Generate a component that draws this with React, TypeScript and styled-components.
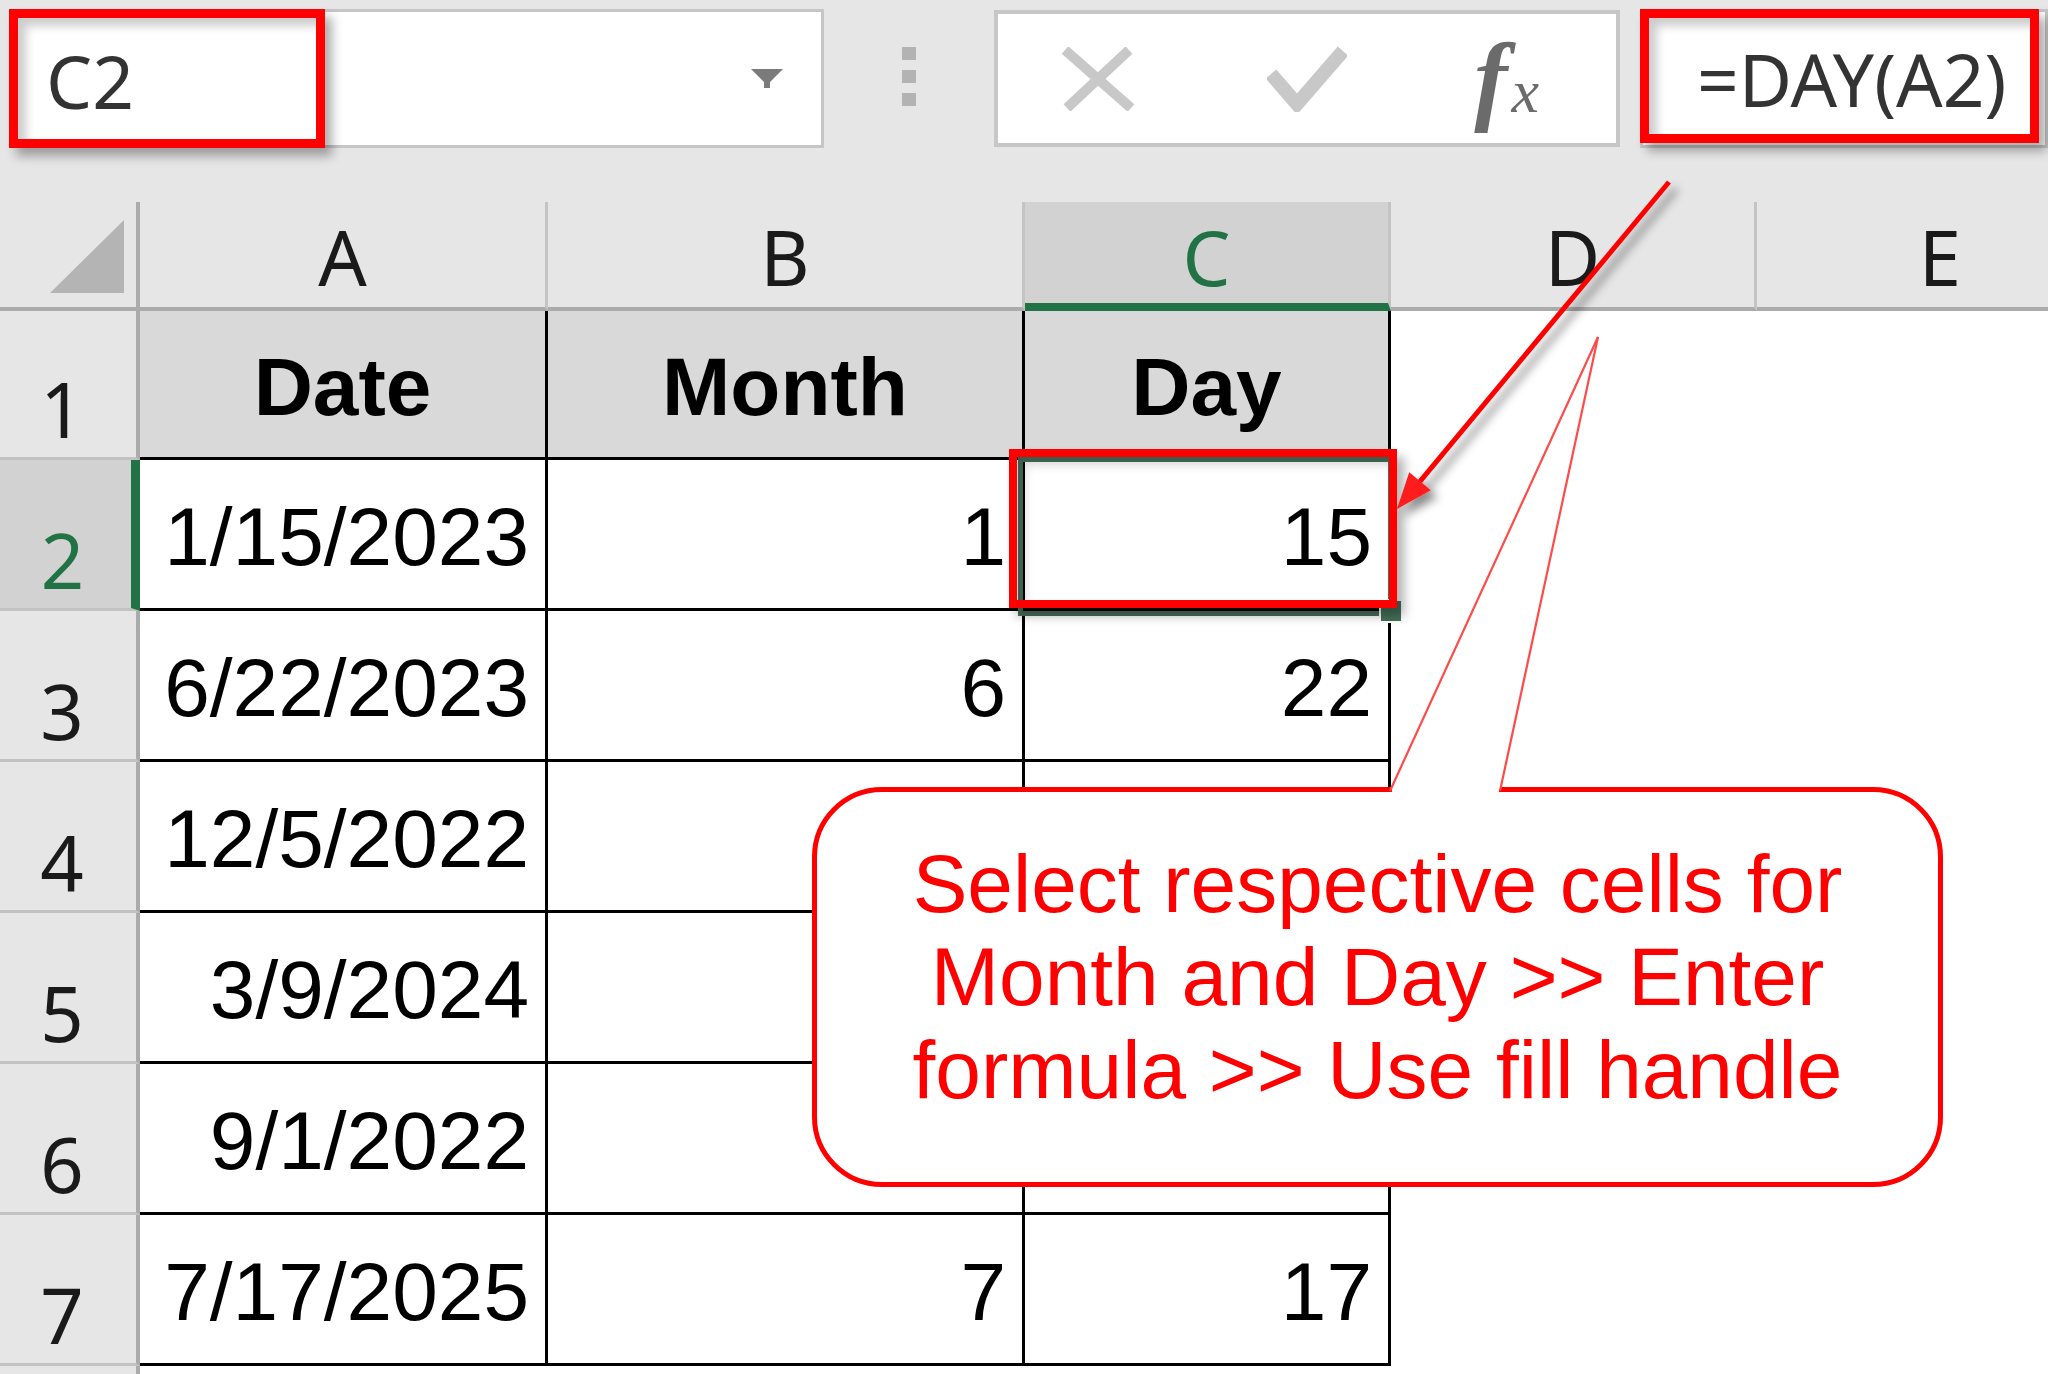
import React from "react";
import styled, { createGlobalStyle } from "styled-components";

const GlobalStyle = createGlobalStyle`
  html, body { margin: 0; padding: 0; background: #ffffff; }
  body { font-family: "Noto Sans", "Open Sans", sans-serif; }
  #root { width: 2048px; height: 1374px; }
`;

const COLS = "140px 408px 477px 366px 366px 366px";

const Page = styled.div`
  position: relative;
  width: 2048px;
  height: 1374px;
  overflow: hidden;
  background: #ffffff;
`;

/* ---------- formula bar ---------- */
const TopBar = styled.div`
  display: flex;
  align-items: flex-start;
  height: 202px;
  box-sizing: border-box;
  padding: 9px 0 0 9px;
  background: #e6e6e6;
`;

const NameBox = styled.div`
  display: flex;
  align-items: center;
  width: 815px;
  height: 139px;
  background: #ffffff;
  box-shadow: inset 0 0 0 3px #c6c6c6;
`;

const Highlight = styled.div<{ $w: number; $h?: number }>`
  box-sizing: border-box;
  width: ${(p) => p.$w}px;
  height: ${(p) => (p.$h ? `${p.$h}px` : "100%")};
  border: 9px solid #ff0000;
  background: #ffffff;
  box-shadow: 7px 8px 10px rgba(0, 0, 0, 0.32),
    inset 8px 8px 10px rgba(0, 0, 0, 0.2);
  display: flex;
  align-items: center;
  position: relative;
  z-index: 2;
`;

const BarText = styled.span<{ $pad: number }>`
  padding-left: ${(p) => p.$pad}px;
  padding-top: 4px;
  font-family: "Noto Sans", "Open Sans", sans-serif;
  font-size: 73px;
  line-height: 1;
  color: #333333;
  white-space: nowrap;
`;

const DropArrow = styled.svg`
  margin-left: auto;
  margin-right: 41px;
  width: 32px;
  height: 19px;
  fill: #7b7b7b;
`;

const DotsColumn = styled.div`
  width: 170px;
  height: 139px;
  display: flex;
  flex-direction: column;
  align-items: center;
  justify-content: center;
  gap: 10px;
  padding-bottom: 4px;
  box-sizing: border-box;
`;

const Dot = styled.span`
  width: 14px;
  height: 13px;
  background: #b3b3b3;
`;

const FormulaButtons = styled.div`
  width: 626px;
  height: 137px;
  margin-top: 1px;
  background: #ffffff;
  box-shadow: inset 0 0 0 4px #c6c6c6;
  display: grid;
  grid-template-columns: repeat(3, 1fr);
  align-items: center;
  justify-items: center;
`;

const IconSvg = styled.svg<{ $w: number; $h: number }>`
  width: ${(p) => p.$w}px;
  height: ${(p) => p.$h}px;
  stroke: #c8c8c8;
  fill: none;
`;

const FxMark = styled.span`
  display: inline-flex;
  align-items: baseline;
  margin-right: 18px;
  font-family: "Liberation Serif", "DejaVu Serif", serif;
  font-style: italic;
  color: #6b6b6b;
  line-height: 1;
`;

const FxF = styled.span`
  font-size: 100px;
  font-weight: 700;
`;

const FxX = styled.span`
  font-size: 62px;
  font-weight: 400;
  margin-left: 4px;
`;

const FormulaInput = styled.div`
  flex: 1;
  height: 139px;
  margin-left: 20px;
  background: #ffffff;
  box-shadow: inset 0 0 0 3px #c6c6c6;
  display: flex;
  align-items: flex-start;
`;

/* ---------- sheet ---------- */
const GridRow = styled.div<{ $h: number }>`
  display: grid;
  grid-template-columns: ${COLS};
  height: ${(p) => p.$h}px;
`;

const Corner = styled.div`
  box-sizing: border-box;
  background: #e6e6e6;
  border-right: 4px solid #ababab;
  border-bottom: 4px solid #ababab;
  display: flex;
  align-items: flex-end;
  justify-content: flex-end;
  padding: 0 12px 14px 0;
`;

const CornerTri = styled.svg`
  width: 74px;
  height: 73px;
  fill: #b4b4b4;
`;

const ColHead = styled.div<{ $sel?: boolean; $last?: boolean }>`
  box-sizing: border-box;
  background: ${(p) => (p.$sel ? "#d2d2d2" : "#e6e6e6")};
  border-right: ${(p) => (p.$last ? "none" : "3px solid #c4c4c4")};
  border-bottom: ${(p) =>
    p.$sel ? "8px solid #217346" : "4px solid #ababab"};
  color: ${(p) => (p.$sel ? "#217346" : "#1a1a1a")};
  display: flex;
  align-items: center;
  justify-content: center;
  padding-top: ${(p) => (p.$sel ? "8px" : "4px")};
  font-family: "Noto Sans", "Open Sans", sans-serif;
  font-size: 76px;
  line-height: 1;
`;

const RowHead = styled.div<{ $sel?: boolean }>`
  box-sizing: border-box;
  background: ${(p) => (p.$sel ? "#d2d2d2" : "#e6e6e6")};
  border-right: ${(p) =>
    p.$sel ? "9px solid #217346" : "4px solid #ababab"};
  border-bottom: 3px solid #c2c2c2;
  color: ${(p) => (p.$sel ? "#217346" : "#1a1a1a")};
  display: flex;
  align-items: flex-end;
  justify-content: center;
  padding: 0 ${(p) => (p.$sel ? "6px" : "12px")} 10px 0;
  font-family: "Noto Sans", "Open Sans", sans-serif;
  font-size: 76px;
  line-height: 1;
`;

const Cell = styled.div<{ $head?: boolean }>`
  box-sizing: border-box;
  position: relative;
  background: ${(p) => (p.$head ? "#d9d9d9" : "#ffffff")};
  border-right: 3px solid #000000;
  border-bottom: 3px solid #000000;
  display: flex;
  align-items: center;
  justify-content: ${(p) => (p.$head ? "center" : "flex-end")};
  padding: 6px 16px 0 16px;
  font-family: "Liberation Sans", Arial, sans-serif;
  font-size: 82px;
  font-weight: ${(p) => (p.$head ? 700 : 400)};
  line-height: 1;
  color: #000000;
  white-space: nowrap;
`;

const EmptyCell = styled.div`
  background: #ffffff;
`;

const Selection = styled.div`
  position: absolute;
  left: -7px;
  top: -3px;
  right: -5px;
  bottom: -8px;
  border: 5px solid #46705a;
  pointer-events: none;
  z-index: 1;
`;

const FillHandle = styled.span`
  position: absolute;
  right: -15px;
  bottom: -12px;
  width: 20px;
  height: 20px;
  background: #46705a;
  border: 2px solid #ffffff;
`;

const CellHighlight = styled.div`
  position: absolute;
  left: -16px;
  top: -11px;
  right: -9px;
  bottom: 0;
  border: 8px solid #ff0000;
  box-shadow: 7px 8px 10px rgba(0, 0, 0, 0.3),
    inset 8px 8px 10px rgba(0, 0, 0, 0.16);
  z-index: 2;
`;

/* ---------- annotations ---------- */
const ArrowLayer = styled.svg`
  position: absolute;
  left: 0;
  top: 0;
  width: 2048px;
  height: 1374px;
  pointer-events: none;
  z-index: 6;
`;

const Callout = styled.div`
  position: absolute;
  left: 812px;
  top: 787px;
  width: 1131px;
  height: 400px;
  box-sizing: border-box;
  border: 5px solid #ff0000;
  border-radius: 70px;
  background: #ffffff;
  display: flex;
  align-items: center;
  justify-content: center;
  z-index: 5;
`;

const CalloutTail = styled.svg`
  position: absolute;
  left: -5px;
  top: -460px;
  width: 1131px;
  height: 470px;
  overflow: visible;
`;

const CalloutText = styled.p`
  margin: 0;
  padding-bottom: 22px;
  text-align: center;
  font-family: "Liberation Sans", Arial, sans-serif;
  font-size: 82px;
  line-height: 93px;
  color: #ff0000;
`;

type RowData = { n: number; a: string; b?: string; c?: string };

const rows: RowData[] = [
  { n: 2, a: "1/15/2023", b: "1", c: "15" },
  { n: 3, a: "6/22/2023", b: "6", c: "22" },
  { n: 4, a: "12/5/2022" },
  { n: 5, a: "3/9/2024" },
  { n: 6, a: "9/1/2022" },
  { n: 7, a: "7/17/2025", b: "7", c: "17" },
];

export default function App() {
  // arrow geometry
  const tip = { x: 1397, y: 509 };
  const start = { x: 1669, y: 182 };
  const dx = tip.x - start.x;
  const dy = tip.y - start.y;
  const len = Math.hypot(dx, dy);
  const ux = dx / len;
  const uy = dy / len;
  const headL = 36;
  const headW = 14;
  const bx = tip.x - headL * ux;
  const by = tip.y - headL * uy;
  const nx = -uy;
  const ny = ux;
  const head = `${tip.x},${tip.y} ${bx + headW * nx},${by + headW * ny} ${
    bx - headW * nx
  },${by - headW * ny}`;

  return (
    <Page>
      <GlobalStyle />
      <TopBar>
        <NameBox>
          <Highlight $w={316}>
            <BarText $pad={28}>C2</BarText>
          </Highlight>
          <DropArrow viewBox="0 0 32 19">
            <polygon points="0,0 32,0 19,13 19,19 13,19 13,13" />
          </DropArrow>
        </NameBox>
        <DotsColumn>
          <Dot />
          <Dot />
          <Dot />
        </DotsColumn>
        <FormulaButtons>
          <IconSvg $w={74} $h={64} viewBox="0 0 74 64">
            <line x1="4" y1="3" x2="70" y2="61" strokeWidth="10" />
            <line x1="68" y1="3" x2="6" y2="61" strokeWidth="10" />
          </IconSvg>
          <IconSvg $w={80} $h={66} viewBox="0 0 80 66">
            <polyline
              points="4,28 30,58 76,5"
              strokeWidth="14"
              strokeLinejoin="miter"
            />
          </IconSvg>
          <FxMark>
            <FxF>f</FxF>
            <FxX>x</FxX>
          </FxMark>
        </FormulaButtons>
        <FormulaInput>
          <Highlight $w={399} $h={134}>
            <BarText $pad={48}>=DAY(A2)</BarText>
          </Highlight>
        </FormulaInput>
      </TopBar>

      <GridRow $h={109}>
        <Corner>
          <CornerTri viewBox="0 0 74 73">
            <polygon points="0,73 74,73 74,0" />
          </CornerTri>
        </Corner>
        <ColHead>A</ColHead>
        <ColHead>B</ColHead>
        <ColHead $sel>C</ColHead>
        <ColHead>D</ColHead>
        <ColHead $last>E</ColHead>
      </GridRow>

      <GridRow $h={149}>
        <RowHead>1</RowHead>
        <Cell $head>Date</Cell>
        <Cell $head>Month</Cell>
        <Cell $head>Day</Cell>
        <EmptyCell />
        <EmptyCell />
      </GridRow>

      {rows.map((r) => (
        <GridRow key={r.n} $h={151}>
          <RowHead $sel={r.n === 2}>{r.n}</RowHead>
          <Cell>{r.a}</Cell>
          <Cell>{r.b}</Cell>
          <Cell>
            {r.c}
            {r.n === 2 && (
              <>
                <Selection>
                  <FillHandle />
                </Selection>
                <CellHighlight />
              </>
            )}
          </Cell>
          <EmptyCell />
          <EmptyCell />
        </GridRow>
      ))}

      <GridRow $h={20}>
        <RowHead />
        <EmptyCell />
        <EmptyCell />
        <EmptyCell />
        <EmptyCell />
        <EmptyCell />
      </GridRow>

      <Callout>
        <CalloutTail viewBox="0 0 1131 470">
          <polygon points="578,457 786,5 688,457" fill="#ffffff" />
          <rect x="580" y="450" width="107" height="14" fill="#ffffff" />
          <line
            x1="578"
            y1="459"
            x2="786"
            y2="5"
            stroke="#ff4a4a"
            strokeWidth="2.2"
          />
          <line
            x1="688"
            y1="459"
            x2="786"
            y2="5"
            stroke="#ff4a4a"
            strokeWidth="2.2"
          />
        </CalloutTail>
        <CalloutText>
          Select respective cells for
          <br />
          Month and Day &gt;&gt; Enter
          <br />
          formula &gt;&gt; Use fill handle
        </CalloutText>
      </Callout>

      <ArrowLayer viewBox="0 0 2048 1374">
        <defs>
          <filter id="arrowShadow" x="-20%" y="-20%" width="140%" height="140%">
            <feDropShadow
              dx="7"
              dy="7"
              stdDeviation="5"
              floodColor="#000000"
              floodOpacity="0.45"
            />
          </filter>
        </defs>
        <g filter="url(#arrowShadow)">
          <line
            x1={start.x}
            y1={start.y}
            x2={bx}
            y2={by}
            stroke="#ff0000"
            strokeWidth="5"
          />
          <polygon points={head} fill="#ff1a1a" />
        </g>
      </ArrowLayer>
    </Page>
  );
}
